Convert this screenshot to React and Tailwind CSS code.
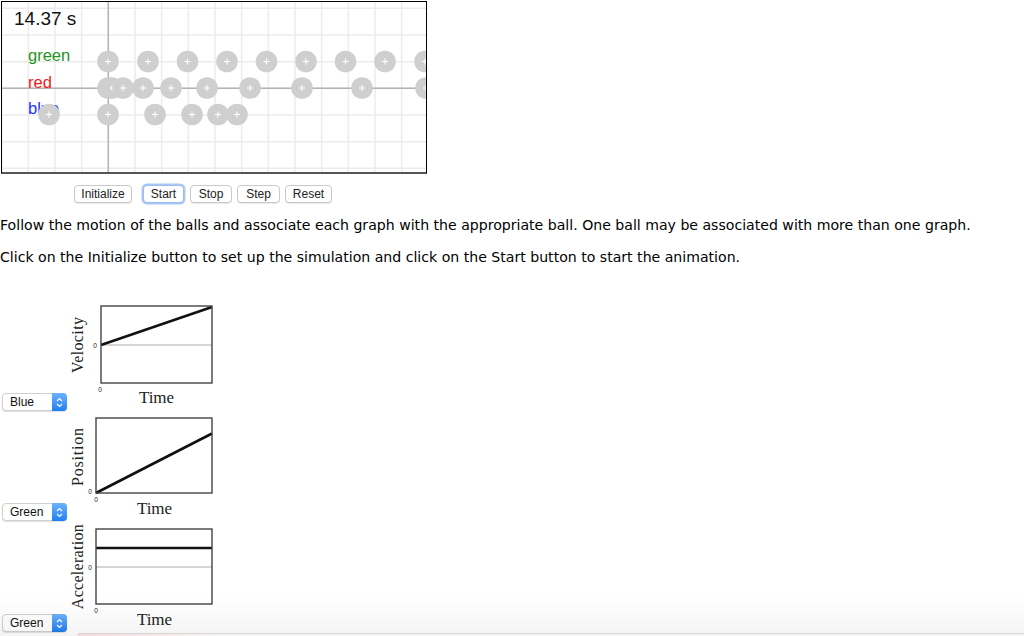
import React from "react";

const GRID_V = Array.from({ length: 17 }, (_, k) => 1.67 + 26.667 * k);
const GRID_H = Array.from({ length: 7 }, (_, k) => 8.33 + 26.667 * k);

const BALLS = [
  ...[108, 148, 187.5, 227, 266.5, 306, 345.5, 385, 425].map((x) => [x, 61.5]),
  ...[108, 112, 123, 143, 171, 207, 250, 302, 362, 426].map((x) => [x, 88]),
  ...[49, 108, 155, 192, 218, 237].map((x) => [x, 114.5]),
];

function Ball({ x, y }) {
  return (
    <g>
      <circle cx={x} cy={y} r={10.8} fill="#cfcfcf" />
      <line x1={x - 3} y1={y} x2={x + 3} y2={y} stroke="#fff" strokeWidth={1.1} />
      <line x1={x} y1={y - 3} x2={x} y2={y + 3} stroke="#fff" strokeWidth={1.1} />
    </g>
  );
}

function Simulation() {
  return (
    <svg width="424" height="170" viewBox="2 2 424 170" className="block">
      <rect x="0" y="0" width="430" height="175" fill="#fff" />
      {GRID_V.map((x) => (
        <line key={"v" + x} x1={x} y1={0} x2={x} y2={175} stroke="#ececec" strokeWidth={1.5} />
      ))}
      {GRID_H.map((y) => (
        <line key={"h" + y} x1={0} y1={y} x2={430} y2={y} stroke="#ececec" strokeWidth={1.5} />
      ))}
      <line x1={108.3} y1={0} x2={108.3} y2={175} stroke="#b3b3b3" strokeWidth={1.5} />
      <line x1={0} y1={88.3} x2={430} y2={88.3} stroke="#b3b3b3" strokeWidth={1.5} />
      <text x={14} y={24.5} fontFamily="'Liberation Sans', Arial, sans-serif" fontSize="19" fill="#111">
        14.37 s
      </text>
      <text x={28} y={61} fontFamily="'Liberation Sans', Arial, sans-serif" fontSize="16.5" fill="#1f951f">
        green
      </text>
      <text x={28} y={87.5} fontFamily="'Liberation Sans', Arial, sans-serif" fontSize="16.5" fill="#f21b1b">
        red
      </text>
      <text x={28} y={114} fontFamily="'Liberation Sans', Arial, sans-serif" fontSize="16.5" fill="#2233ff">
        blue
      </text>
      {BALLS.map(([x, y], i) => (
        <Ball key={i} x={x} y={y} />
      ))}
    </svg>
  );
}

function Btn({ children, w, ml, focus }) {
  return (
    <div
      className={
        "flex items-center justify-center h-[18px] rounded-[4px] bg-white text-[12px] leading-none text-[#222] " +
        (focus
          ? "border border-[#9bbcf2] shadow-[0_0_0_1.5px_#a9c8f6]"
          : "border border-[#c9c9c9] shadow-[0_1px_0_rgba(0,0,0,0.08)]")
      }
      style={{ width: w, marginLeft: ml, fontFamily: "'Liberation Sans', Arial, sans-serif" }}
    >
      {children}
    </div>
  );
}

function Select({ label, mb }) {
  return (
    <div
      className="relative ml-[2px] w-[65px] h-[18px] shrink-0 rounded-[4px] border border-[#cfcfcf] bg-white shadow-[0_1px_1px_rgba(0,0,0,0.12)] flex items-center"
      style={{ marginBottom: mb }}
    >
      <span
        className="pl-[7px] text-[12px] leading-none text-[#111]"
        style={{ fontFamily: "'Liberation Sans', Arial, sans-serif" }}
      >
        {label}
      </span>
      <div className="absolute right-[-1px] top-[-1px] bottom-[-1px] w-[15px] rounded-r-[4px] bg-gradient-to-b from-[#6cb2fb] to-[#1d7ef2] flex items-center justify-center">
        <svg width="9" height="13" viewBox="0 0 9 13">
          <path d="M2 5 L4.5 2.5 L7 5" fill="none" stroke="#fff" strokeWidth="1.2" />
          <path d="M2 8 L4.5 10.5 L7 8" fill="none" stroke="#fff" strokeWidth="1.2" />
        </svg>
      </div>
    </div>
  );
}

const SERIF = "'Liberation Serif', 'Times New Roman', serif";

function Zero({ x, y }) {
  return (
    <text x={x} y={y} textAnchor="middle" fontSize="6.5" fontFamily="'Liberation Sans', sans-serif" fill="#222">
      0
    </text>
  );
}

function Graph({ kind }) {
  const boxX = kind === "v" ? 34 : 29;
  const boxY = kind === "v" ? 5 : 6;
  const boxH = kind === "v" ? 77 : 75;
  const boxW = 145 - boxX;
  let label, labelLen, labelCy;
  if (kind === "v") {
    label = "Velocity";
    labelLen = 56;
    labelCy = 44;
  } else if (kind === "p") {
    label = "Position";
    labelLen = 58;
    labelCy = 45;
  } else {
    label = "Acceleration";
    labelLen = 85;
    labelCy = 43.7;
  }
  return (
    <svg width="150" height="111" viewBox="0 0 150 111" className="block shrink-0">
      <text
        x={0}
        y={0}
        transform={`translate(15.5 ${labelCy}) rotate(-90)`}
        textAnchor="middle"
        fontFamily={SERIF}
        fontSize="16"
        fill="#222"
        textLength={labelLen}
        lengthAdjust="spacing"
      >
        {label}
      </text>
      {kind === "v" && (
        <>
          <line x1={boxX} y1={44} x2={145} y2={44} stroke="#aaa" strokeWidth="1" />
          <line x1={boxX} y1={44} x2={145} y2={6} stroke="#111" strokeWidth="2.6" />
          <Zero x={28} y={46.5} />
          <Zero x={33} y={91} />
        </>
      )}
      {kind === "p" && (
        <>
          <line x1={boxX} y1={81} x2={145} y2={21.5} stroke="#111" strokeWidth="2.6" />
          <Zero x={23} y={81.5} />
          <Zero x={29} y={90} />
        </>
      )}
      {kind === "a" && (
        <>
          <line x1={boxX} y1={44} x2={145} y2={44} stroke="#aaa" strokeWidth="1" />
          <line x1={boxX} y1={25} x2={145} y2={25} stroke="#111" strokeWidth="2.4" />
          <Zero x={23} y={46.5} />
          <Zero x={29} y={90} />
        </>
      )}
      <rect x={boxX} y={boxY} width={boxW} height={boxH} fill="none" stroke="#444" strokeWidth="1.4" />
      <text
        x={kind === "v" ? 89.5 : 87.5}
        y={102}
        textAnchor="middle"
        fontFamily={SERIF}
        fontSize="17"
        fill="#222"
        textLength={35}
        lengthAdjust="spacing"
      >
        Time
      </text>
    </svg>
  );
}

export default function App() {
  return (
    <div className="relative w-[1024px] h-[636px] overflow-hidden bg-white">
      <div className="ml-[1px] mt-[1px] w-[426px] h-[173px] border border-black border-b-2 border-b-[#555] overflow-hidden">
        <Simulation />
      </div>
      <div className="flex mt-[11px]">
        <Btn w={58} ml={74}>Initialize</Btn>
        <Btn w={41} ml={11} focus>Start</Btn>
        <Btn w={42} ml={6}>Stop</Btn>
        <Btn w={43} ml={5}>Step</Btn>
        <Btn w={47} ml={5}>Reset</Btn>
      </div>
      <div
        style={{ fontFamily: "'DejaVu Sans', Verdana, sans-serif" }}
        className="text-[14.1px] leading-[17px] text-black whitespace-nowrap"
      >
        <p className="mt-[14px]">
          Follow the motion of the balls and associate each graph with the appropriate ball. One ball may be associated
          with more than one graph.
        </p>
        <p className="mt-[15px]">
          Click on the Initialize button to set up the simulation and click on the Start button to start the animation.
        </p>
      </div>
      <div className="mt-[35px] flex flex-col">
        <div className="flex items-end h-[111px]">
          <Select label="Blue" mb={1} />
          <Graph kind="v" />
        </div>
        <div className="flex items-end h-[111px]">
          <Select label="Green" mb={2} />
          <Graph kind="p" />
        </div>
        <div className="flex items-end h-[111px]">
          <Select label="Green" mb={2} />
          <Graph kind="a" />
        </div>
      </div>
      <div className="pointer-events-none absolute left-0 right-0 bottom-0 h-[40px] bg-gradient-to-b from-transparent to-[rgba(0,0,0,0.045)]" />
      <div className="pointer-events-none absolute left-[78px] right-0 bottom-[2px] h-[1px] bg-[#d6d6d6]" />
      <div className="pointer-events-none absolute left-[78px] w-[140px] bottom-0 h-[2px] bg-gradient-to-r from-[#f6d8d8] to-transparent" />
    </div>
  );
}
